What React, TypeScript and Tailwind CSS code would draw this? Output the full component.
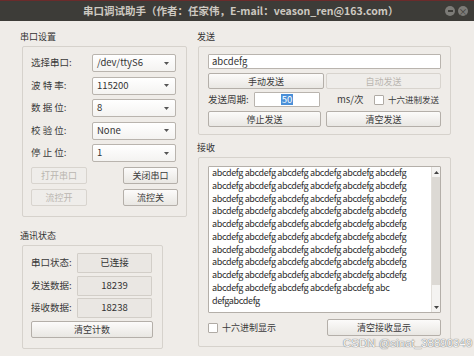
import React from "react";

const combos = [
  { label: "选择串口:", value: "/dev/ttyS6" },
  { label: "波 特 率:", value: "115200" },
  { label: "数 据 位:", value: "8" },
  { label: "校 验 位:", value: "None" },
  { label: "停 止 位:", value: "1" },
];

const stats = [
  { label: "串口状态:", value: "已连接" },
  { label: "发送数据:", value: "18239" },
  { label: "接收数据:", value: "18238" },
];

const recvLines = [
  ...Array(9).fill("abcdefg abcdefg abcdefg abcdefg abcdefg abcdefg"),
  "abcdefg abcdefg abcdefg abcdefg abcdefg abc",
  "defgabcdefg",
];

function Btn({ children, disabled, className = "" }: { children: React.ReactNode; disabled?: boolean; className?: string }) {
  return (
    <div
      className={
        "flex items-center justify-center whitespace-nowrap rounded-[2px] border text-[9px] leading-none " +
        (disabled
          ? "border-[#d8d4ce] bg-[#efedea] text-[#bab6b0] "
          : "border-[#b4afa9] bg-gradient-to-b from-[#fcfbfa] to-[#e9e7e3] text-[#3a3a3a] ") +
        className
      }
    >
      {children}
    </div>
  );
}

function Combo({ value }: { value: string }) {
  return (
    <div className="flex h-[18px] w-[84px] items-center rounded-[2px] border border-[#b9b4ae] bg-gradient-to-b from-white to-[#f4f3f1] pl-[4px] pr-[6px] text-[9.5px] leading-none text-[#333]">
      <span className="flex-1">{value}</span>
      <svg width="5" height="3" viewBox="0 0 5 3">
        <path d="M0 0h5L2.5 3z" fill="#555" />
      </svg>
    </div>
  );
}

function Check() {
  return <div className="h-[10px] w-[10px] shrink-0 rounded-[1px] border border-[#b0aba5] bg-white" />;
}

function GroupTitle({ children }: { children: React.ReactNode }) {
  return <div className="h-[16px] text-[9px] leading-[14px] text-[#333]">{children}</div>;
}

export default function App() {
  return (
    <div className="relative h-[356px] w-[474px] overflow-hidden bg-[#efece8] font-['Noto_Sans_CJK_SC',sans-serif]">
      {/* title bar */}
      <div className="flex h-[21px] items-center border-t border-[#6b2b2b] bg-[#3d3c38]">
        <div className="flex-1 whitespace-nowrap pl-[83px] text-[10.5px] font-bold leading-none text-[#cdc9c1]">
          串口调试助手（作者：任家伟，E-mail：veason_ren@163.com）
        </div>
        <div className="flex gap-[3px] pr-[6px]">
          <div className="flex h-[10px] w-[10px] items-center justify-center rounded-full bg-[#7c7b77]">
            <div className="h-[1.5px] w-[5px] bg-[#3d3c38]" />
          </div>
          <div className="flex h-[10px] w-[10px] items-center justify-center rounded-full bg-[#7c7b77] text-[9px] leading-none text-[#3d3c38]">
            ×
          </div>
        </div>
      </div>

      <div className="flex gap-[10px] pl-[20px] pt-[9px]">
        {/* left column */}
        <div className="flex w-[167px] flex-col">
          <GroupTitle>串口设置</GroupTitle>
          <div className="ml-[2px] flex h-[171px] w-[165px] flex-col rounded-[2px] border border-[#d6d2cc] px-[8px] pt-[7px]">
            <div className="flex flex-col gap-[4.5px]">
              {combos.map((c) => (
                <div key={c.label} className="flex items-center">
                  <span className="w-[61px] whitespace-pre text-[9.5px] leading-none text-[#3a3a3a]">{c.label}</span>
                  <Combo value={c.value} />
                </div>
              ))}
            </div>
            <div className="mt-[5px] flex flex-col gap-[5px]">
              <div className="flex justify-between">
                <Btn disabled className="h-[17px] w-[56px]">打开串口</Btn>
                <Btn className="h-[17px] w-[55px]">关闭串口</Btn>
              </div>
              <div className="flex justify-between">
                <Btn disabled className="h-[17px] w-[56px]">流控开</Btn>
                <Btn className="h-[17px] w-[55px]">流控关</Btn>
              </div>
            </div>
          </div>

          <div className="mt-[12px]">
            <GroupTitle>通讯状态</GroupTitle>
          </div>
          <div className="ml-[2px] flex h-[104px] w-[141px] flex-col rounded-[2px] border border-[#d6d2cc] px-[8px] pt-[7px]">
            <div className="flex flex-col gap-[2.5px]">
              {stats.map((s) => (
                <div key={s.label} className="flex items-center">
                  <span className="w-[46px] whitespace-nowrap text-[9.5px] leading-none text-[#3a3a3a]">{s.label}</span>
                  <div className="flex h-[20px] w-[75px] items-center justify-center rounded-[1px] border border-[#d2cec8] bg-[#eae7e3] text-[9.5px] leading-none text-[#333]">
                    {s.value}
                  </div>
                </div>
              ))}
            </div>
            <Btn className="mt-[3px] h-[17px] w-[122px]">清空计数</Btn>
          </div>
        </div>

        {/* right column */}
        <div className="flex w-[255px] flex-col">
          <GroupTitle>发送</GroupTitle>
          <div className="ml-[1px] flex h-[89px] w-[253px] flex-col rounded-[2px] border border-[#d6d2cc] px-[9px] pt-[7px]">
            <div className="flex h-[15px] items-center rounded-[1px] border border-[#b9b4ae] bg-white pl-[3px] text-[9.5px] leading-none text-[#333]">
              abcdefg
            </div>
            <div className="mt-[4px] flex justify-between">
              <Btn className="h-[16px] w-[116px]">手动发送</Btn>
              <Btn disabled className="h-[16px] w-[115px]">自动发送</Btn>
            </div>
            <div className="mt-[3px] flex h-[15px] items-center whitespace-nowrap text-[9.5px] leading-none text-[#3a3a3a]">
              <span className="w-[46px]">发送周期:</span>
              <div className="flex h-[15px] w-[66px] items-center justify-center rounded-[1px] border border-[#b9b4ae] bg-white">
                <span className="bg-[#4a8fd8] px-[1px] py-[1px] text-white">50</span>
              </div>
              <span className="ml-[17px] w-[20px]">ms/次</span>
              <div className="ml-[17px]">
                <Check />
              </div>
              <span className="ml-[4px] text-[8.5px]">十六进制发送</span>
            </div>
            <div className="mt-[4px] flex justify-between">
              <Btn className="h-[16px] w-[113px]">停止发送</Btn>
              <Btn className="h-[16px] w-[115px]">清空发送</Btn>
            </div>
          </div>

          <div className="mt-[6px]">
            <GroupTitle>接收</GroupTitle>
          </div>
          <div className="ml-[1px] flex h-[190px] w-[253px] flex-col rounded-[2px] border border-[#d6d2cc] px-[9px] pt-[8px]">
            <div className="flex h-[147px] rounded-[1px] border border-[#b4afa9] bg-white">
              <div className="flex-1 whitespace-nowrap pl-[3px] text-[9px] leading-[12.75px] tracking-[-0.35px] text-[#2e2e2e]">
                {recvLines.map((l, i) => (
                  <div key={i}>{l}</div>
                ))}
              </div>
              <div className="flex w-[9px] flex-col border-l border-[#e2dfda] bg-[#f4f3f1]">
                <div className="flex h-[10px] items-center justify-center">
                  <svg width="5" height="3" viewBox="0 0 5 3">
                    <path d="M0 3h5L2.5 0z" fill="#444" />
                  </svg>
                </div>
                <div className="h-[108px] bg-[#dcd9d4]" />
                <div className="flex-1" />
                <div className="flex h-[10px] items-center justify-center">
                  <svg width="5" height="3" viewBox="0 0 5 3">
                    <path d="M0 0h5L2.5 3z" fill="#444" />
                  </svg>
                </div>
              </div>
            </div>
            <div className="mt-[6px] flex items-center">
              <Check />
              <span className="ml-[4px] whitespace-nowrap text-[9px] leading-none text-[#3a3a3a]">十六进制显示</span>
              <Btn className="ml-auto h-[17px] w-[114px]">清空接收显示</Btn>
            </div>
          </div>
        </div>
      </div>

      {/* watermark */}
      <div className="absolute left-[343px] top-[335px] whitespace-nowrap font-['Liberation_Sans',sans-serif] text-[11.5px] leading-[16px] text-[#f7f7f7] [text-shadow:0_0_1px_#777,0_0_1px_#777]">
        CSDN @sinat_38890349
      </div>
    </div>
  );
}
